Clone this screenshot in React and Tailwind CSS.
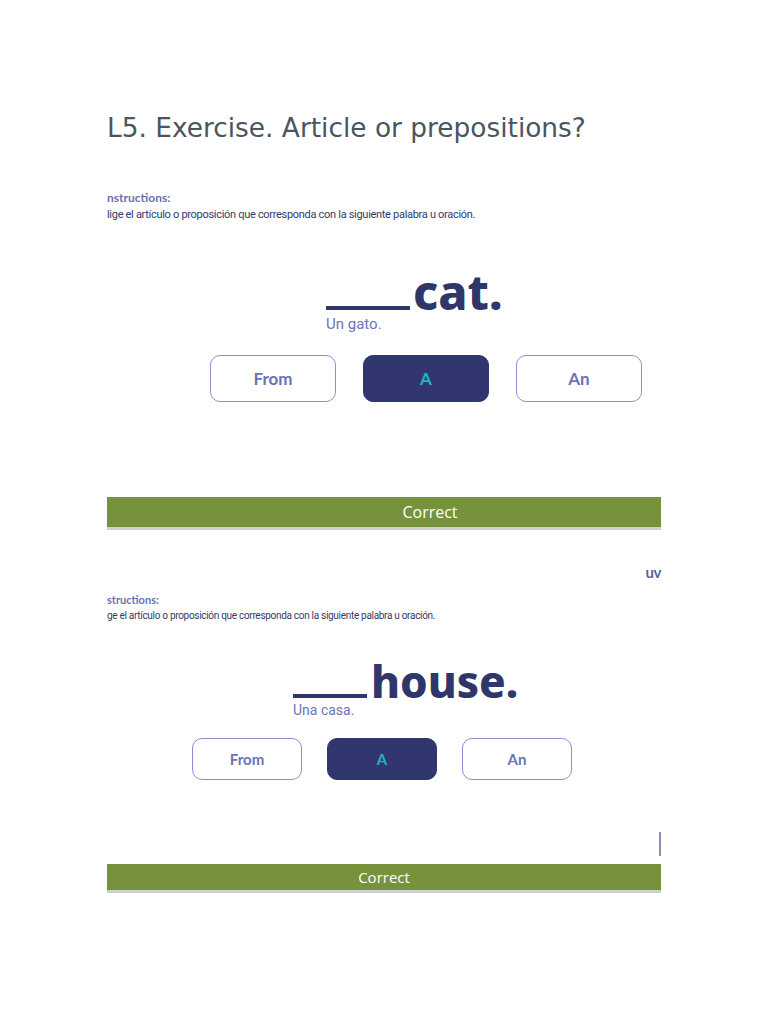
const NAVY = 'text-[#2f3669]';

const Choice = ({ label, active, size }) => {
  const dims = size === 'lg' ? 'w-[126px] h-[47px] text-[17px]' : 'w-[110px] h-[42px] text-[15px]';
  return (
    <div
      className={`${dims} flex items-center justify-center rounded-[10px] font-bold ${
        active ? 'bg-[#31376e] text-[#1fb5c6] border border-[#31376e]' : 'border-[1.5px] border-[#8a90d0] text-[#6b72b8] bg-white'
      }`}
      style={{ fontFamily: 'Lato, "Noto Sans", sans-serif' }}
    >
      {label}
    </div>
  );
};

const CorrectBar = ({ h, text, offset }) => (
  <div className="w-[554px]">
    <div
      className={`${h} bg-[#76923a] text-white flex items-center justify-center`}
      style={{ fontFamily: '"Open Sans", sans-serif' }}
    >
      <span className={offset}>{text}</span>
    </div>
    <div className="h-[3px] bg-[#cfcfcf]" />
  </div>
);

export default function App() {
  return (
    <div className="w-[768px] min-h-[1024px] bg-white pt-[112px]">
      <h1
        className="ml-[107px] text-[26.4px] leading-[32px] text-[#4b5560]"
        style={{ fontFamily: '"DejaVu Sans", sans-serif' }}
      >
        L5. Exercise. Article or prepositions?
      </h1>

      {/* Exercise 1 */}
      <section className="ml-[107px] w-[554px] mt-[47px]">
        <div className="font-bold text-[12px] leading-[14px] text-[#6a6fb0]" style={{ fontFamily: 'Lato, sans-serif' }}>
          nstructions:
        </div>
        <div className="mt-[3px] text-[11px] leading-[13px] text-[#333a6b] tracking-[-0.3px]" style={{ fontFamily: 'Roboto, sans-serif' }}>
          lige el artículo o proposición que corresponda con la siguiente palabra u oración.
        </div>

        <div className="mt-[49px] pl-[219px]">
          <div className="flex items-baseline">
            <div className="w-[84px] h-[4px] bg-[#2f3669] mb-[1px]" />
            <span
              className={`ml-[3px] text-[48px] leading-[44px] font-extrabold ${NAVY}`}
              style={{ fontFamily: '"Noto Sans", sans-serif' }}
            >
              cat.
            </span>
          </div>
          <div className="mt-[2px] text-[15px] leading-[16px] text-[#6e74b9]" style={{ fontFamily: 'Roboto, sans-serif' }}>
            Un gato.
          </div>
        </div>

        <div className="mt-[23px] pl-[103px] flex gap-[27px]">
          <Choice label="From" size="lg" />
          <Choice label="A" size="lg" active />
          <Choice label="An" size="lg" />
        </div>

        <div className="mt-[95px]">
          <CorrectBar h="h-[30px]" text="Correct" offset="ml-[92px] text-[16px]" />
        </div>
      </section>

      {/* Exercise 2 */}
      <section className="ml-[107px] w-[554px] mt-[35px]">
        <div className="flex justify-end h-[14px]">
          <span className="font-bold text-[15px] leading-[14px] text-[#5a5fa5] tracking-[-0.5px]" style={{ fontFamily: 'Lato, sans-serif' }}>
            uv
          </span>
        </div>
        <div className="mt-[14px] font-bold text-[11px] leading-[13px] text-[#6a6fb0]" style={{ fontFamily: 'Lato, sans-serif' }}>
          structions:
        </div>
        <div className="mt-[4px] text-[10px] leading-[12px] text-[#333a6b] tracking-[-0.3px]" style={{ fontFamily: 'Roboto, sans-serif' }}>
          ge el artículo o proposición que corresponda con la siguiente palabra u oración.
        </div>

        <div className="mt-[39px] pl-[186px]">
          <div className="flex items-baseline">
            <div className="w-[74px] h-[4px] bg-[#2f3669] mb-[1px]" />
            <span
              className={`ml-[4px] text-[44px] leading-[40px] font-extrabold ${NAVY}`}
              style={{ fontFamily: '"Noto Sans", sans-serif' }}
            >
              house.
            </span>
          </div>
          <div className="mt-[2px] text-[14px] leading-[15px] text-[#6e74b9]" style={{ fontFamily: 'Roboto, sans-serif' }}>
            Una casa.
          </div>
        </div>

        <div className="mt-[20px] pl-[85px] flex gap-[25px]">
          <Choice label="From" size="sm" />
          <Choice label="A" size="sm" active />
          <Choice label="An" size="sm" />
        </div>

        <div className="mt-[52px] flex justify-end">
          <div className="w-[2px] h-[24px] bg-[#8a90b0]" />
        </div>

        <div className="mt-[8px]">
          <CorrectBar h="h-[26px]" text="Correct" offset="text-[15px]" />
        </div>
      </section>
    </div>
  );
}
